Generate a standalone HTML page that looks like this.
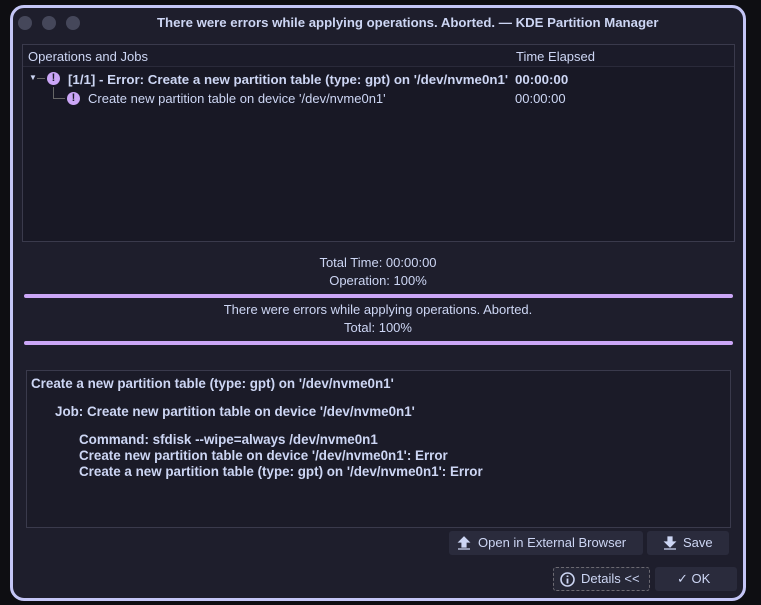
<!DOCTYPE html><html><head><style>
*{margin:0;padding:0;box-sizing:border-box}
body{width:761px;height:605px;background:#0e0e12;font-family:"Liberation Sans",sans-serif;color:#cdd6f4;font-size:13px;position:relative;overflow:hidden}
.win{position:absolute;left:10px;top:5px;width:736px;height:596px;border:3px solid #c4c6f6;border-radius:14px;background:#1e1e2c;overflow:hidden}
.a{position:absolute;white-space:nowrap}
.dot{position:absolute;top:8px;width:14px;height:14px;border-radius:50%;background:#45475a}
.tree{position:absolute;left:9px;top:36px;width:713px;height:198px;border:1px solid #3a3a4c;background:#181825}
.hdr{position:absolute;left:0;top:0;width:711px;height:22px;border-bottom:1px solid #2a2a3a;background:#1b1b29}
.ic{position:absolute;width:13px;height:13px;border-radius:50%;background:#cba6f7;color:#1e1e2e;font-weight:bold;font-size:11px;line-height:13px;text-align:center}
.bar{position:absolute;left:11px;width:709px;height:4px;border-radius:2px;background:#cba6f7}
.det{position:absolute;left:13px;top:362px;width:705px;height:158px;border:1px solid #3a3a4c;background:#1b1b28}
.b{font-weight:bold;font-size:13.4px}
.btn{position:absolute;height:24px;background:#2a2b3c;border-radius:3px;font-size:13px;line-height:24px;color:#cdd6f4}
</style></head><body>
<div class="win">
<div class="dot" style="left:5px"></div><div class="dot" style="left:29px"></div><div class="dot" style="left:53px"></div>
<div class="a" style="left:144px;top:7px;font-weight:bold;font-size:13.2px">There were errors while applying operations. Aborted. — KDE Partition Manager</div>
<div class="tree">
<div class="hdr"><span class="a" style="left:5px;top:4px">Operations and Jobs</span><span class="a" style="left:493px;top:4px">Time Elapsed</span></div>
<div class="a" style="left:6px;top:28px;font-size:8px;color:#cdd6f4">▼</div>
<div class="a" style="left:14px;top:33px;width:8px;height:1px;background:#666"></div>
<div class="ic" style="left:24px;top:27px">!</div>
<div class="a b" style="left:45px;top:27px;font-size:13.3px">[1/1] - Error: Create a new partition table (type: gpt) on '/dev/nvme0n1'</div>
<div class="a b" style="left:492px;top:27px;font-size:13.3px">00:00:00</div>
<div class="a" style="left:30px;top:42px;width:1px;height:11px;background:#666"></div>
<div class="a" style="left:30px;top:53px;width:12px;height:1px;background:#666"></div>
<div class="ic" style="left:44px;top:47px">!</div>
<div class="a" style="left:65px;top:46px">Create new partition table on device '/dev/nvme0n1'</div>
<div class="a" style="left:492px;top:46px">00:00:00</div>
</div>
<div class="a" style="left:0;width:730px;text-align:center;top:247px">Total Time: 00:00:00</div>
<div class="a" style="left:0;width:730px;text-align:center;top:265px">Operation: 100%</div>
<div class="bar" style="top:286px"></div>
<div class="a" style="left:0;width:730px;text-align:center;top:294px">There were errors while applying operations. Aborted.</div>
<div class="a" style="left:0;width:730px;text-align:center;top:312px">Total: 100%</div>
<div class="bar" style="top:333px"></div>
<div class="det">
<div class="a b" style="left:4px;top:5px">Create a new partition table (type: gpt) on '/dev/nvme0n1'</div>
<div class="a b" style="left:28px;top:33px">Job: Create new partition table on device '/dev/nvme0n1'</div>
<div class="a b" style="left:52px;top:61px">Command: sfdisk --wipe=always /dev/nvme0n1</div>
<div class="a b" style="left:52px;top:77px">Create new partition table on device '/dev/nvme0n1': Error</div>
<div class="a b" style="left:52px;top:93px">Create a new partition table (type: gpt) on '/dev/nvme0n1': Error</div>
</div>
<div class="btn" style="left:436px;top:523px;width:194px"><svg style="position:absolute;left:8px;top:5px" width="14" height="14" viewBox="0 0 14 14"><path d="M7 1L2 6h3v5h4V6h3z M1 13h12" fill="#cdd6f4" stroke="#cdd6f4" stroke-width="1.2"/></svg><span class="a" style="left:29px">Open in External Browser</span></div>
<div class="btn" style="left:634px;top:523px;width:82px"><svg style="position:absolute;left:16px;top:5px" width="14" height="14" viewBox="0 0 14 14"><path d="M7 11L2 6h3V1h4v5h3z M1 13h12" fill="#cdd6f4" stroke="#cdd6f4" stroke-width="1.2"/></svg><span class="a" style="left:36px">Save</span></div>
<div class="btn" style="left:540px;top:559px;width:97px;border:1px dashed #6c6a72;background:#262736"><svg style="position:absolute;left:6px;top:4px" width="15" height="15" viewBox="0 0 15 15"><circle cx="7.5" cy="7.5" r="6.5" fill="none" stroke="#cdd6f4" stroke-width="1.6"/><path d="M7.5 6.5v5M7.5 3.5v1.5" stroke="#cdd6f4" stroke-width="1.8"/></svg><span class="a" style="left:27px;top:-1px">Details &lt;&lt;</span></div>
<div class="btn" style="left:642px;top:559px;width:82px"><span class="a" style="left:22px">✓ OK</span></div>
</div>
</body></html>
